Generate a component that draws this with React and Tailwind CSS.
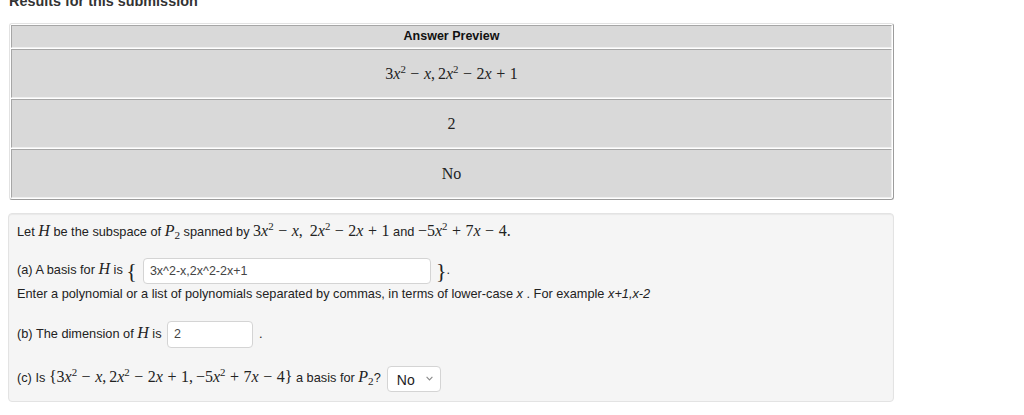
import { useState } from "react";

const sans = "font-['Liberation_Sans','Helvetica','Arial',sans-serif]";
const serif = "font-['Liberation_Serif','Times_New_Roman',serif]";

// tiny math helpers, roughly what MathJax puts out
function V({ children }) {
  return <span className="italic">{children}</span>;
}
function Sq() {
  return <sup className="relative -top-[1px] align-[0.45em] text-[0.68em] leading-none">2</sup>;
}
function Op({ children }) {
  return <span className="mx-[4.5px]">{children}</span>;
}
function Cal() {
  return (
    <span className="whitespace-nowrap">
      <span className="italic">P</span>
      <sub className="relative top-[1px] align-[-0.15em] text-[0.7em] leading-none">2</sub>
    </span>
  );
}
function M({ children, className = "" }) {
  return <span className={`${serif} text-[16px] whitespace-nowrap ${className}`}>{children}</span>;
}

function Poly1() {
  return (
    <>
      3<V>x</V>
      <Sq />
      <Op>−</Op>
      <V>x</V>
    </>
  );
}
function Poly2() {
  return (
    <>
      2<V>x</V>
      <Sq />
      <Op>−</Op>2<V>x</V>
      <Op>+</Op>1
    </>
  );
}
function Poly3() {
  return (
    <>
      −5<V>x</V>
      <Sq />
      <Op>+</Op>7<V>x</V>
      <Op>−</Op>4
    </>
  );
}

function Cell({ head, children }) {
  return (
    <div
      className={`flex items-center justify-center border border-t-[#a6a6a6] border-l-[#a6a6a6] border-b-[#efefef] border-r-[#efefef] bg-[#d9d9d9] ${
        head ? "h-[23px]" : "h-[49px]"
      }`}
    >
      {children}
    </div>
  );
}

export default function App() {
  const [basis, setBasis] = useState("3x^2-x,2x^2-2x+1");
  const [dim, setDim] = useState("2");
  const [isBasis, setIsBasis] = useState("No");

  return (
    <div className={`${sans} min-h-[415px] overflow-hidden bg-white text-[#222]`}>
      <div className="ml-[9px] -mt-[7px] h-[16px] text-[14.4px] leading-[16px] font-bold text-[#333]">
        Results for this submission
      </div>

      <div className="ml-[9px] mt-[14px] flex w-[885px] flex-col gap-[1px] rounded-[3px] border border-t-[#e2e2e2] border-l-[#e2e2e2] border-b-[#9c9c9c] border-r-[#9c9c9c] bg-white p-[1px]">
        <Cell head>
          <span className="text-[12.5px] font-bold text-[#111]">Answer Preview</span>
        </Cell>
        <Cell>
          <M>
            <Poly1 />,<span className="ml-[3px]" />
            <Poly2 />
          </M>
        </Cell>
        <Cell>
          <M>2</M>
        </Cell>
        <Cell>
          <M>No</M>
        </Cell>
      </div>

      <div className="ml-[8px] mt-[13px] w-[886px] rounded-[4px] border border-[#e3e3e3] bg-[#f5f5f5] pl-[8px] pt-[8px] pb-[11px] text-[12.75px] text-[#222] shadow-[inset_0_1px_1px_rgba(0,0,0,0.05)]">
        <div className="h-[18px] whitespace-nowrap leading-[18px]">
          Let <M><V>H</V></M> be the subspace of <M><Cal /></M> spanned by{" "}
          <M>
            <Poly1 />,<span className="ml-[7px]" />
            <Poly2 />
          </M>{" "}
          and{" "}
          <M>
            <Poly3 />.
          </M>
        </div>

        <div className="mt-[16px] h-[26px] whitespace-nowrap leading-[26px]">
          (a) A basis for <M><V>H</V></M> is{" "}
          <span className={`${serif} inline-block align-middle text-[22px] leading-none`}>{"{"}</span>
          <input
            value={basis}
            onChange={(e) => setBasis(e.target.value)}
            className="ml-[6px] h-[26px] w-[288px] rounded-[4px] border border-[#d4d4d4] bg-white px-[6px] align-middle text-[12.5px] text-[#444] outline-none"
          />
          <span className={`${serif} ml-[5px] inline-block align-middle text-[22px] leading-none`}>{"}"}</span>
          <span>.</span>
        </div>

        <div className="mt-[4px] h-[16px] whitespace-nowrap leading-[16px]">
          Enter a polynomial or a list of polynomials separated by commas, in terms of lower-case{" "}
          <span className="italic">x</span> . For example <span className="italic">x+1,x-2</span>
        </div>

        <div className="mt-[17px] h-[27px] whitespace-nowrap leading-[27px]">
          (b) The dimension of <M><V>H</V></M> is{" "}
          <input
            value={dim}
            onChange={(e) => setDim(e.target.value)}
            className="ml-[2px] h-[27px] w-[86px] rounded-[4px] border border-[#d4d4d4] bg-white px-[6px] align-middle text-[12.5px] text-[#444] outline-none"
          />
          <span className="ml-[6px]">.</span>
        </div>

        <div className="mt-[18px] h-[26px] whitespace-nowrap leading-[26px]">
          (c) Is{" "}
          <M>
            {"{"}
            <Poly1 />,<span className="ml-[3px]" />
            <Poly2 />,<span className="ml-[3px]" />
            <Poly3 />
            {"}"}
          </M>{" "}
          a basis for <M><Cal /></M>?
          <span className="relative ml-[6px] inline-block h-[26px] w-[54px] align-middle">
            <select
              value={isBasis}
              onChange={(e) => setIsBasis(e.target.value)}
              className="block h-full w-full appearance-none rounded-[4px] border border-[#d4d4d4] bg-white pl-[9px] text-[14px] text-[#222] outline-none"
            >
              <option>?</option>
              <option>Yes</option>
              <option>No</option>
            </select>
            <svg
              className="pointer-events-none absolute right-[8px] top-[10px]"
              width="7"
              height="5"
              viewBox="0 0 7 5"
              fill="none"
              stroke="#8a8a8a"
              strokeWidth="1.1"
            >
              <path d="M0.6 0.8 L3.5 3.9 L6.4 0.8" />
            </svg>
          </span>
        </div>
      </div>
    </div>
  );
}
